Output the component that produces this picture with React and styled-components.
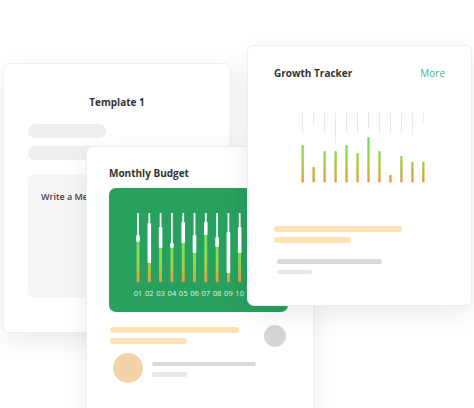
import styled, { createGlobalStyle } from "styled-components";

const GlobalStyle = createGlobalStyle`
	html, body {
		margin: 0;
		padding: 0;
		background: #fff;
		font-family: "Open Sans", "Liberation Sans", sans-serif;
	}
`;

const budget = [
	[47, 54],
	[35, 75],
	[39, 60],
	[55, 60],
	[34, 55],
	[47, 65],
	[34, 47],
	[49, 59],
	[44, 85],
	[39, 65],
	[40, 58],
	[45, 62],
];

const growth = [
	{ top: 145, line: 133 },
	{ top: 167, line: 125 },
	{ top: 151, line: 133 },
	{ top: 151, line: 143 },
	{ top: 145, line: 131 },
	{ top: 153, line: 133 },
	{ top: 137, line: 128 },
	{ top: 151, line: 133 },
	{ top: 175, line: 133 },
	{ top: 156, line: 133 },
	{ top: 162, line: 135 },
	{ top: 162, line: 122 },
];

const App = () => {
	return (
		<>
			<GlobalStyle />
			<Stage>
				<Card $left={3} $top={63} $width={228} $height={270} $pad="24px">
					<CenterTitle>Template 1</CenterTitle>
					<Pill $width={78} />
					<Pill $width={170} />
					<MessageBox>Write a Message</MessageBox>
				</Card>

				<Card $left={86} $top={146} $width={228} $height={280} $pad="18px 27px 0 22px">
					<Title>Monthly Budget</Title>
					<GreenBox>
						<BudgetChart />
					</GreenBox>
					<InfoRow>
						<Lines>
							<Line $width={129} />
							<Line $width={77} />
						</Lines>
						<Dot $size={22} $color="#d6d6d6" />
					</InfoRow>
					<ProfileRow>
						<Dot $size={30} $color="#f3d4a9" />
						<Lines $gap={6}>
							<Line $width={104} $h={4.5} $color="#dadada" />
							<Line $width={35} $h={4.5} $color="#e8e8e8" />
						</Lines>
					</ProfileRow>
				</Card>

				<Card $left={247} $top={45} $width={225} $height={261} $pad="19px 26px 0 26px">
					<Header>
						<Title>Growth Tracker</Title>
						<MoreLink>More</MoreLink>
					</Header>
					<GrowthChart />
					<Lines $gap={5} $mt={38}>
						<Line $width={128} />
						<Line $width={77} />
					</Lines>
					<Lines $gap={6} $mt={16} $ml={3}>
						<Line $width={105} $h={5} $color="#dadada" />
						<Line $width={35} $h={4} $color="#e8e8e8" />
					</Lines>
				</Card>
			</Stage>
		</>
	);
};

const BudgetChart = () => (
	<svg width="179" height="124" viewBox="0 0 179 124">
		<defs>
			<linearGradient id="bfill" x1="0" y1="55" x2="0" y2="94" gradientUnits="userSpaceOnUse">
				<stop offset="0" stopColor="#7be257" />
				<stop offset="0.55" stopColor="#9fd449" />
				<stop offset="1" stopColor="#f0973c" />
			</linearGradient>
		</defs>
		{budget.map(([k1, k2], i) => {
			const x = 29 + i * 11.3;
			return (
				<g key={i}>
					<rect x={x - 0.9} y={25} width={1.8} height={69} fill="#ffffff" opacity="0.95" />
					<rect x={x - 1.4} y={k2} width={2.8} height={94 - k2} fill="url(#bfill)" />
					<rect x={x - 1.8} y={k1} width={3.6} height={k2 - k1} rx={1} fill="#ffffff" />
					<text x={x} y={108} fontSize="7.6" fill="#dff3e6" textAnchor="middle" fontFamily="Open Sans, sans-serif">
						{String(i + 1).padStart(2, "0")}
					</text>
				</g>
			);
		})}
	</svg>
);

const GrowthChart = () => (
	<ChartWrap>
		<svg width="173" height="80" viewBox="0 0 173 80">
			<defs>
				<linearGradient id="gfill" x1="0" y1="30" x2="0" y2="75" gradientUnits="userSpaceOnUse">
					<stop offset="0" stopColor="#74e256" />
					<stop offset="0.5" stopColor="#a0d24a" />
					<stop offset="1" stopColor="#f0973c" />
				</linearGradient>
			</defs>
			{growth.map((b, i) => {
				const x = 29 + i * 11.1;
				return (
					<g key={i}>
						<rect x={x - 0.5} y={4} width={1} height={b.line - 112} fill="#e4e7f4" />
						<rect x={x - 1.2} y={b.top - 108} width={2.4} height={183 - b.top} rx={1} fill="url(#gfill)" />
					</g>
				);
			})}
		</svg>
	</ChartWrap>
);

const Stage = styled.div`
	position: relative;
	width: 474px;
	height: 408px;
	overflow: hidden;
	background: #fff;
`;

const Card = styled.div`
	position: absolute;
	left: ${(p) => p.$left}px;
	top: ${(p) => p.$top}px;
	width: ${(p) => p.$width}px;
	height: ${(p) => p.$height}px;
	box-sizing: border-box;
	padding: ${(p) => p.$pad};
	background: #fff;
	border: 1px solid #eeeeee;
	border-radius: 7px;
	box-shadow: 0 8px 28px rgba(0, 0, 0, 0.08);
	display: flex;
	flex-direction: column;
`;

const Title = styled.div`
	font-size: 10px;
	font-weight: 700;
	color: #333;
	line-height: 16px;
`;

const CenterTitle = styled(Title)`
	text-align: center;
	margin-top: 6px;
	margin-bottom: 14px;
`;

const Header = styled.div`
	display: flex;
	justify-content: space-between;
	align-items: center;
	margin-bottom: 27px;
`;

const MoreLink = styled.span`
	font-size: 10px;
	color: #4bb382;
	line-height: 16px;
`;

const Pill = styled.div`
	width: ${(p) => p.$width}px;
	height: 14px;
	border-radius: 7px;
	background: #efefef;
	margin-bottom: 8px;
`;

const MessageBox = styled.div`
	margin-top: 6px;
	height: 124px;
	border-radius: 7px;
	background: #f6f6f6;
	box-sizing: border-box;
	padding: 16px 13px;
	font-size: 9px;
	font-weight: 600;
	color: #444;
	white-space: nowrap;
	overflow: hidden;
`;

const GreenBox = styled.div`
	margin-top: 7px;
	width: 179px;
	height: 124px;
	border-radius: 7px;
	background: #28a15f;
	display: flex;
`;

const InfoRow = styled.div`
	display: flex;
	justify-content: space-between;
	align-items: flex-start;
	margin-top: 13px;
	padding-left: 1px;
`;

const ProfileRow = styled.div`
	display: flex;
	align-items: center;
	gap: 9px;
	margin-top: 6px;
	padding-left: 4px;
`;

const Lines = styled.div`
	display: flex;
	flex-direction: column;
	gap: ${(p) => p.$gap ?? 5}px;
	margin-top: ${(p) => p.$mt ?? 2}px;
	margin-left: ${(p) => p.$ml ?? 0}px;
`;

const Line = styled.div`
	width: ${(p) => p.$width}px;
	height: ${(p) => p.$h ?? 6}px;
	border-radius: 3px;
	background: ${(p) => p.$color ?? "#fde2b6"};
`;

const Dot = styled.div`
	width: ${(p) => p.$size}px;
	height: ${(p) => p.$size}px;
	border-radius: 50%;
	background: ${(p) => p.$color};
	flex-shrink: 0;
`;

const ChartWrap = styled.div`
	height: 80px;
	display: flex;
`;

export default App;
